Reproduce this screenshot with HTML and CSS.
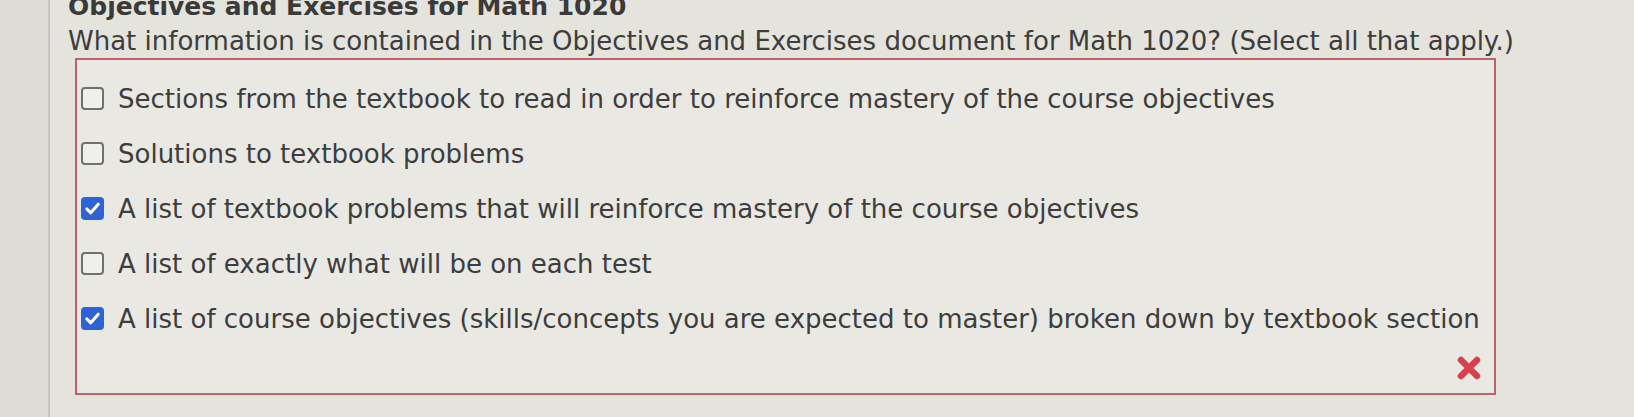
FILE: index.html
```html
<!DOCTYPE html>
<html lang="en">
<head>
<meta charset="utf-8">
<title>Objectives and Exercises for Math 1020</title>
<link rel="stylesheet" href="styles.css">
</head>
<body>
<div class="page">
  <div class="sidebar"></div>
  <div class="main">
    <h1 class="title">Objectives and Exercises for Math 1020</h1>
    <p class="question">What information is contained in the Objectives and Exercises document for Math 1020? (Select all that apply.)</p>
    <div class="answer-box">
      <label class="option">
        <span class="checkbox"></span>
        <span class="option-text">Sections from the textbook to read in order to reinforce mastery of the course objectives</span>
      </label>
      <label class="option">
        <span class="checkbox"></span>
        <span class="option-text">Solutions to textbook problems</span>
      </label>
      <label class="option">
        <span class="checkbox checked"><svg viewBox="0 0 24 24" width="23" height="23"><path d="M6 12.5 L10.2 16.5 L18 7.5" fill="none" stroke="#fff" stroke-width="3.2" stroke-linecap="round" stroke-linejoin="round"/></svg></span>
        <span class="option-text">A list of textbook problems that will reinforce mastery of the course objectives</span>
      </label>
      <label class="option">
        <span class="checkbox"></span>
        <span class="option-text">A list of exactly what will be on each test</span>
      </label>
      <label class="option">
        <span class="checkbox checked"><svg viewBox="0 0 24 24" width="23" height="23"><path d="M6 12.5 L10.2 16.5 L18 7.5" fill="none" stroke="#fff" stroke-width="3.2" stroke-linecap="round" stroke-linejoin="round"/></svg></span>
        <span class="option-text">A list of course objectives (skills/concepts you are expected to master) broken down by textbook section</span>
      </label>
      <div class="result">
        <svg class="wrong-icon" viewBox="0 0 28 28" width="28" height="28"><path d="M6 6 L22 22 M22 6 L6 22" fill="none" stroke="#d8404c" stroke-width="6.5" stroke-linecap="round"/></svg>
      </div>
    </div>
  </div>
</div>
</body>
</html>
```

FILE: styles.css
```css
html, body {
  margin: 0;
  padding: 0;
}

body {
  background: #e4e3dc;
  font-family: "DejaVu Sans", Verdana, sans-serif;
  color: #3c3c3c;
  width: 1634px;
  height: 417px;
  overflow: hidden;
}

.page {
  display: flex;
  height: 417px;
}

.sidebar {
  width: 48px;
  flex: none;
  background: #dddcd5;
  border-right: 2px solid #c4c3bc;
}

.main {
  flex: 1;
  padding-left: 18px;
}

.title {
  margin: -7px 0 0 0;
  font-size: 25px;
  line-height: 28px;
  font-weight: bold;
  color: #3a3a3a;
}

.question {
  margin: 5px 0 0 0;
  font-size: 26px;
  line-height: 30px;
  color: #3d3d3d;
}

.answer-box {
  box-sizing: border-box;
  margin: 2px 0 0 7px;
  width: 1421px;
  height: 337px;
  border: 2px solid #bd626c;
  background: #e9e8e2;
  padding: 11px 11px 10px 4px;
  display: flex;
  flex-direction: column;
}

.option {
  height: 55px;
  display: flex;
  align-items: center;
  gap: 14px;
  font-size: 26px;
  color: #3d3d3d;
}

.checkbox {
  box-sizing: border-box;
  width: 23px;
  height: 23px;
  flex: none;
  border: 2px solid #707070;
  border-radius: 4px;
  background: #efefeb;
  display: flex;
  align-items: center;
  justify-content: center;
}

.checkbox.checked {
  border: none;
  background: #2e63d5;
}

.option-text {
  white-space: nowrap;
}

.result {
  margin-top: auto;
  height: 30px;
  display: flex;
  justify-content: flex-end;
  align-items: center;
}
```
